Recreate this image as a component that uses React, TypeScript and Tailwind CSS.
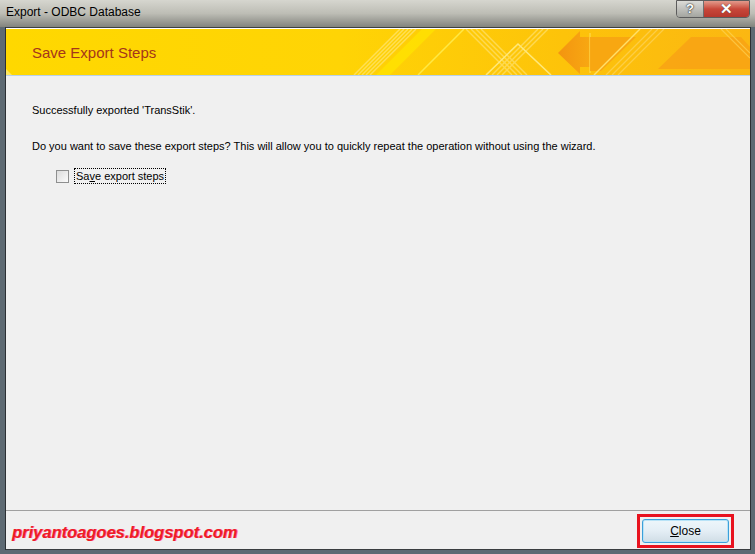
import React from "react"

const ui = { fontFamily: '"Liberation Sans", Arial, sans-serif' }

function HeaderArt() {
  return (
    <svg className="absolute inset-0" width="744" height="46" viewBox="0 0 744 46">
      <defs>
        <linearGradient id="hdr" x1="0" y1="0" x2="1" y2="0">
          <stop offset="0" stopColor="#ffd800" />
          <stop offset="0.45" stopColor="#ffd405" />
          <stop offset="0.75" stopColor="#fdc30a" />
          <stop offset="1" stopColor="#fbb712" />
        </linearGradient>
        <linearGradient id="arrow" x1="0" y1="0" x2="1" y2="0">
          <stop offset="0" stopColor="#f39410" />
          <stop offset="1" stopColor="#f8a812" />
        </linearGradient>
      </defs>
      <rect width="744" height="46" fill="url(#hdr)" />
      {/* stripe group 1 */}
      <g stroke="#ffe36a" strokeWidth="1.4" opacity="0.8">
        <line x1="348" y1="46" x2="394" y2="0" />
        <line x1="352" y1="46" x2="398" y2="0" />
        <line x1="356" y1="46" x2="402" y2="0" />
        <line x1="360" y1="46" x2="406" y2="0" />
        <line x1="364" y1="46" x2="410" y2="0" />
      </g>
      <polygon points="370,46 384,46 430,0 416,0" fill="#ffe600" opacity="0.7" />
      <line x1="412" y1="46" x2="458" y2="0" stroke="#ffe845" strokeWidth="1.5" />
      {/* stripe group 2 */}
      <g stroke="#ffe06a" strokeWidth="1.4" opacity="0.75">
        <line x1="460" y1="0" x2="506" y2="46" />
        <line x1="465" y1="0" x2="511" y2="46" />
        <line x1="470" y1="0" x2="516" y2="46" />
        <line x1="475" y1="0" x2="521" y2="46" />
        <line x1="486" y1="46" x2="532" y2="0" />
        <line x1="491" y1="46" x2="537" y2="0" />
        <line x1="496" y1="46" x2="542" y2="0" />
      </g>
      <polyline points="480,46 512,15 545,46" fill="none" stroke="#ffe87a" strokeWidth="1.6" />
      {/* arrow */}
      <polygon points="552,24 574,2 574,8 584,8 584,38 574,38 574,45" fill="url(#arrow)" />
      <line x1="584" y1="4" x2="584" y2="44" stroke="#ffd84a" strokeWidth="1.3" />
      <polygon points="584,8 630,8 595,42 584,42" fill="#f7a412" opacity="0.9" />
      <line x1="588" y1="46" x2="634" y2="0" stroke="#ffe06a" strokeWidth="1.4" />
      <g stroke="#ffd86a" strokeWidth="1.3" opacity="0.6">
        <line x1="600" y1="46" x2="646" y2="0" />
        <line x1="606" y1="46" x2="652" y2="0" />
        <line x1="612" y1="46" x2="658" y2="0" />
      </g>
      {/* right trapezoid */}
      <polygon points="652,40 685,8 735,8 744,18 744,40" fill="#f8a414" opacity="0.9" />
      <g stroke="#ffd860" strokeWidth="1.2" opacity="0.6">
        <line x1="715" y1="0" x2="744" y2="29" />
        <line x1="720" y1="0" x2="744" y2="24" />
      </g>
      <polygon points="0,40 6,46 0,46" fill="#ffe860" />
    </svg>
  )
}

export default function App() {
  return (
    <div className="w-[755px] h-[554px] flex flex-col overflow-hidden bg-[#5e6a73]" style={ui}>
      {/* title bar */}
      <div className="h-[27px] flex items-start justify-between bg-gradient-to-b from-[#d6d6cf] via-[#bdbdb5] to-[#83847e]">
        <div className="pl-[6px] pt-[5px] text-[12px] leading-[14px] text-black">Export - ODBC Database</div>
        <div className="flex mr-[5px] h-[18px] border border-[#5c5c5c] rounded-b-[4px] overflow-hidden">
          <div className="w-[27px] flex items-center justify-center bg-gradient-to-b from-[#dcdcd8] to-[#a4a5a0] border-r border-[#6e6e6e] text-[13px] font-bold text-white [text-shadow:0_0_2px_#222,0_0_1px_#222]">?</div>
          <div className="w-[45px] flex items-center justify-center bg-gradient-to-b from-[#e29a8c] via-[#c8473a] to-[#b6372d] text-[15px] font-bold text-white [text-shadow:0_0_1px_#333]">✕</div>
        </div>
      </div>
      <div className="flex flex-1">
        <div className="w-[6px] border-r border-[#2c3034]" />
        <div className="w-[744px] flex flex-col bg-[#f0f0f0] border-t border-[#3c3f42] border-b border-b-[#3a3d40]">
          {/* header */}
          <div className="relative h-[48px] border-t border-white border-b border-b-[#b9d1ea]">
            <HeaderArt />
            <div className="relative pl-[26px] pt-[15px] text-[15px] leading-[18px] text-[#a5361b]">Save Export Steps</div>
          </div>
          {/* body */}
          <div className="flex-1 pl-[26px] pt-[27px] text-[11px] leading-[14px] text-black">
            <div>Successfully exported 'TransStik'.</div>
            <div className="mt-[22px]">
              Do you want to save these export steps? This will allow you to quickly repeat the operation without using the wizard.
            </div>
            <div className="mt-[15px] ml-[24px] flex items-center gap-[5px]">
              <div className="w-[13px] h-[13px] border border-[#8e8f8f] bg-gradient-to-br from-[#dcdcdc] to-[#fbfbfb] p-[2px]">
                <div className="w-full h-full bg-gradient-to-br from-[#e1e1e1] to-[#f6f6f6]" />
              </div>
              <div className="border border-dotted border-black px-[1px] leading-[14px]">
                Sa<span className="underline">v</span>e export steps
              </div>
            </div>
          </div>
          {/* footer */}
          <div className="h-[39px] border-t border-[#a0a0a0] flex items-center justify-between pl-[6px] pr-[16px]">
            <div className="text-[16.5px] font-bold italic text-[#ee1c25] [text-shadow:1px_0_0_#ff6fa0] pt-[4px]">priyantoagoes.blogspot.com</div>
            <div className="border-[3px] border-[#e8121e] p-[2px] mt-[2px]">
              <div className="w-[87px] h-[24px] rounded-[3px] border border-[#3c9fd9] bg-gradient-to-b from-[#edf6fb] via-[#e4eef5] to-[#d0dde6] flex items-center justify-center text-[12px] text-black shadow-[inset_0_0_0_1px_#b8e3f7]">
                <span><span className="underline">C</span>lose</span>
              </div>
            </div>
          </div>
        </div>
        <div className="w-[5px] border-l border-[#2c3034]" />
      </div>
      <div className="h-[4px]" />
    </div>
  )
}
